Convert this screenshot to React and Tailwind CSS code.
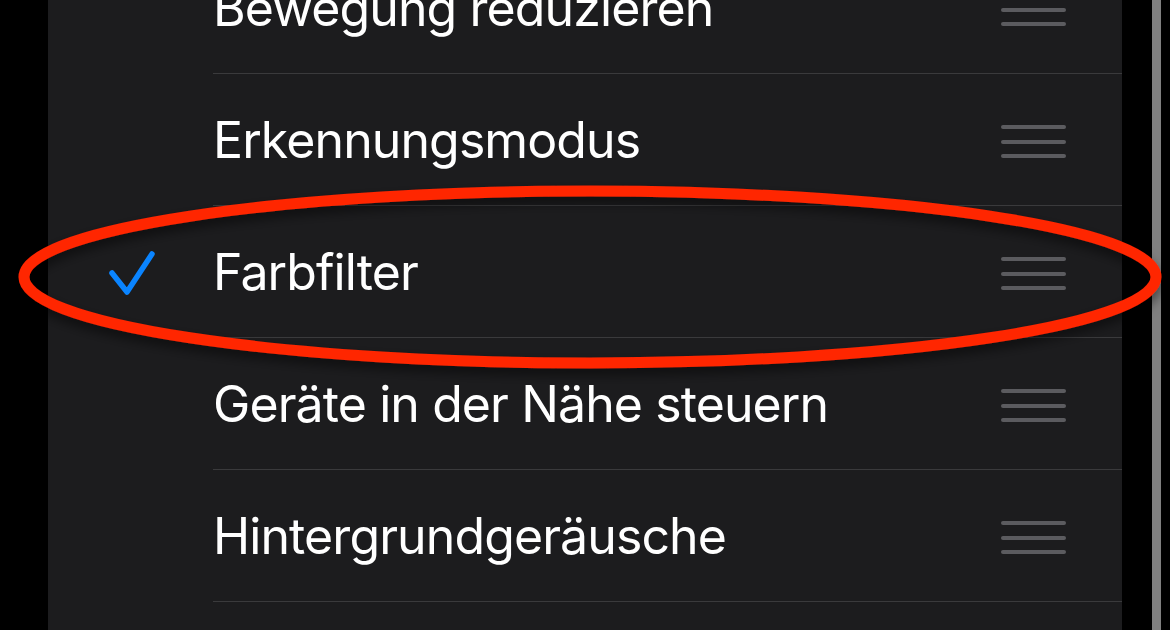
const items = [
  { name: 'Bewegung reduzieren', checked: false },
  { name: 'Erkennungsmodus', checked: false },
  { name: 'Farbfilter', checked: true },
  { name: 'Geräte in der Nähe steuern', checked: false },
  { name: 'Hintergrundgeräusche', checked: false },
];

function DragHandle() {
  return (
    <div className="w-[65px] flex flex-col gap-[10.5px] mt-[4px]">
      <span className="block h-[4px] rounded-full bg-[#5b5b5f]" />
      <span className="block h-[4px] rounded-full bg-[#5b5b5f]" />
      <span className="block h-[4px] rounded-full bg-[#5b5b5f]" />
    </div>
  );
}

function Check() {
  return (
    <svg width="165" height="132" viewBox="0 0 165 132" fill="none">
      <polyline
        points="64,67 79,86 104,48"
        stroke="#0a84ff"
        strokeWidth="5.5"
        strokeLinecap="round"
        strokeLinejoin="round"
      />
    </svg>
  );
}

export default function App() {
  return (
    <div
      className="relative h-[630px] w-[1170px] bg-black overflow-hidden flex"
      style={{ fontFamily: 'Inter, "Noto Sans", sans-serif' }}
    >
      <div className="ml-[48px] w-[1074px] bg-[#1c1c1e]">
        <div className="-mt-[58px] flex flex-col">
          {items.map((item) => (
            <div key={item.name} className="h-[132px] flex shrink-0">
              <div className="w-[165px] shrink-0">{item.checked && <Check />}</div>
              <div className="flex-1 flex items-center border-b border-[#3a3a3c] pr-[56px]">
                <span className="flex-1 text-[50px] leading-none text-white tracking-[-0.9px]">
                  {item.name}
                </span>
                <DragHandle />
              </div>
            </div>
          ))}
        </div>
      </div>
      <div className="ml-[30px] w-[9px] bg-[#808080]" />

      {/* red annotation ring */}
      <svg
        className="absolute inset-0 pointer-events-none"
        width="1170"
        height="630"
        viewBox="0 0 1170 630"
        fill="none"
      >
        <defs>
          <filter id="sh" x="-10%" y="-30%" width="120%" height="160%">
            <feDropShadow dx="0" dy="6" stdDeviation="6" floodColor="#000" floodOpacity="0.55" />
          </filter>
        </defs>
        <ellipse
          cx="590"
          cy="277"
          rx="566"
          ry="86"
          stroke="#ff2600"
          strokeWidth="11"
          filter="url(#sh)"
        />
      </svg>
    </div>
  );
}
